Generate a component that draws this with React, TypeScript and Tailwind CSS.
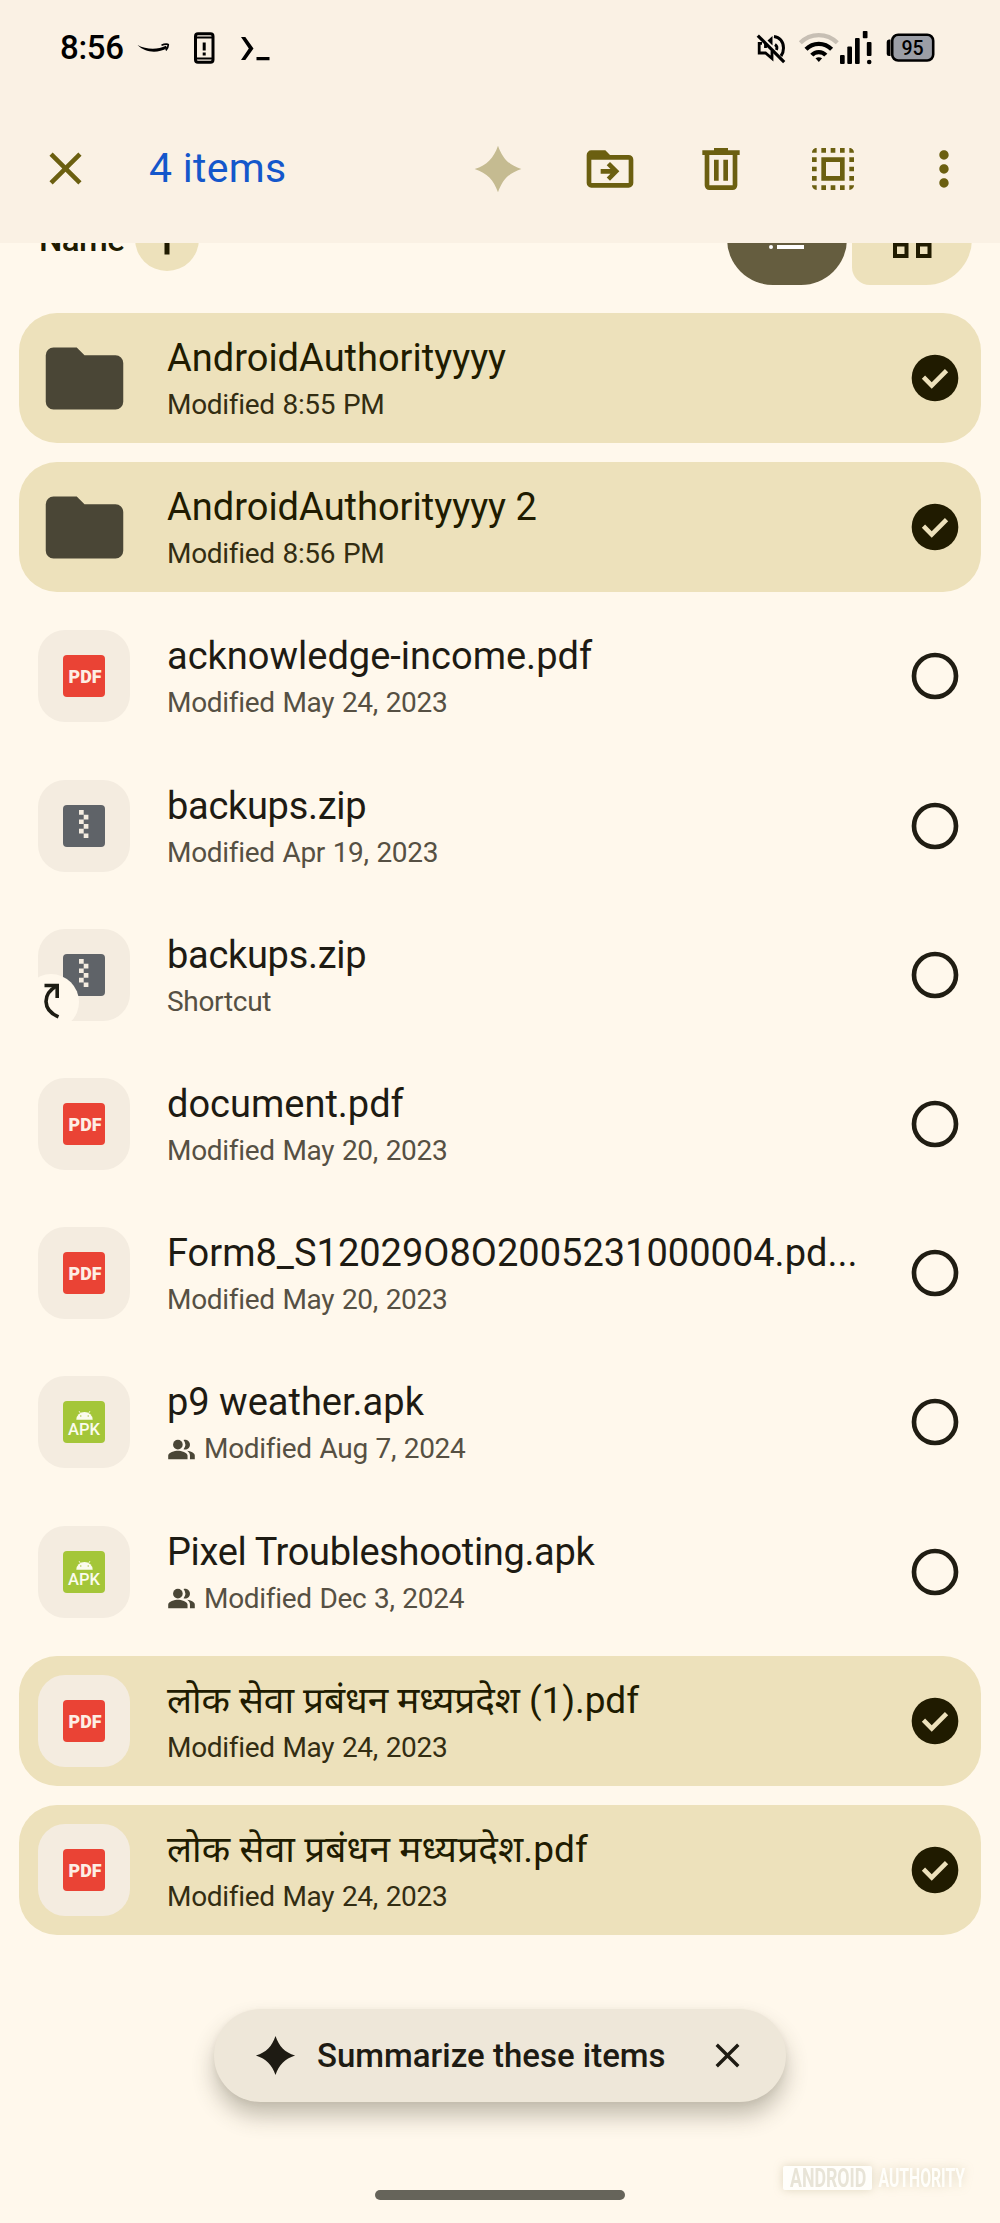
import React from 'react';
import clsx from 'clsx';
import { MdMoreVert, MdPeopleAlt, MdSelectAll } from 'react-icons/md';

type FileKind = 'folder' | 'pdf' | 'zip' | 'apk';

interface FileItem {
  name: string;
  detail: string;
  kind: FileKind;
  selected?: boolean;
  shared?: boolean;
  shortcut?: boolean;
  nameClass?: string;
}

const FILES: FileItem[] = [
  { name: 'AndroidAuthorityyyy', detail: 'Modified 8:55 PM', kind: 'folder', selected: true },
  { name: 'AndroidAuthorityyyy 2', detail: 'Modified 8:56 PM', kind: 'folder', selected: true },
  { name: 'acknowledge-income.pdf', detail: 'Modified May 24, 2023', kind: 'pdf' },
  { name: 'backups.zip', detail: 'Modified Apr 19, 2023', kind: 'zip', nameClass: 'text-[38px] tracking-[-0.3px]' },
  { name: 'backups.zip', detail: 'Shortcut', kind: 'zip', shortcut: true, nameClass: 'text-[38px] tracking-[-0.3px]' },
  { name: 'document.pdf', detail: 'Modified May 20, 2023', kind: 'pdf' },
  { name: 'Form8_S12029O8O2005231000004.pd...', detail: 'Modified May 20, 2023', kind: 'pdf' },
  { name: 'p9 weather.apk', detail: 'Modified Aug 7, 2024', kind: 'apk', shared: true },
  { name: 'Pixel Troubleshooting.apk', detail: 'Modified Dec 3, 2024', kind: 'apk', shared: true, nameClass: 'text-[38px] tracking-[-0.35px]' },
  { name: 'लोक सेवा प्रबंधन मध्यप्रदेश (1).pdf', detail: 'Modified May 24, 2023', kind: 'pdf', selected: true, nameClass: 'text-[37px] tracking-[-0.1px]' },
  { name: 'लोक सेवा प्रबंधन मध्यप्रदेश.pdf', detail: 'Modified May 24, 2023', kind: 'pdf', selected: true, nameClass: 'text-[37px] tracking-[0.1px]' },
];

const Sparkle = ({ className }: { className?: string }) => (
  <svg viewBox="0 0 24 24" fill="currentColor" className={className}>
    <path d="M12 2C13.9 7.4 16.6 10.2 22 12C16.6 13.8 13.9 16.6 12 22C10.1 16.6 7.4 13.8 2 12C7.4 10.2 10.1 7.4 12 2Z" />
  </svg>
);

const CloseIcon = ({ className }: { className?: string }) => (
  <svg viewBox="0 0 24 24" fill="currentColor" className={className}>
    <path d="M6.4 19L5 17.6l5.6-5.6L5 6.4 6.4 5l5.6 5.6L17.6 5 19 6.4 13.4 12l5.6 5.6-1.4 1.4-5.6-5.6z" />
  </svg>
);

const StatusBar = () => (
  <div className="flex h-[95px] items-center pl-[60px] text-black">
    <span className="w-[77px] text-[33px] font-medium leading-none tracking-[-0.3px]">8:56</span>
    <svg width="133" height="34" viewBox="137 30 133 34" className="shrink-0">
      <path d="M137.5 44C146 48.5 157 49.3 166 44.8L167.2 47C157 53 145 51.5 137.5 44Z" />
      <path d="M161.5 44.2C165 42.8 168.3 43 168.3 43.8S167.5 47.5 165.8 49.3" fill="none" stroke="#000" strokeWidth="1.7" />
      <rect x="195.5" y="32.7" width="17.5" height="28.6" rx="2.5" fill="none" stroke="#000" strokeWidth="3" />
      <path d="M195 36.5h18.5M195 57.5h18.5" stroke="#000" strokeWidth="2.2" />
      <path d="M202.7 41.5h3v8h-3zM202.7 51.5h3v3h-3z" />
      <path d="M241 36h4.3l8.2 11.5-8.2 11.5h-4.3l7.8-11.5zM256.5 56H269.5v3.2h-13z" />
    </svg>
    <svg width="182" height="36" viewBox="757 29 182 36" className="ml-auto mr-[62px] shrink-0">
      <g fill="none" stroke="#000" strokeWidth="2.8">
        <path d="M763 42.3L760.2 42.3V52h6.3l6.5 5.5V50M766.5 42v5" />
        <path d="M775 35.5c5.5.5 9.5 5 9.5 11.5 0 3.5-1 6-2.5 8" strokeWidth="3" />
        <path d="M776 43.5c1.8 1.2 2.3 3.5 1.5 5.5" />
        <path d="M758.8 34.6L785.2 61.2" strokeWidth="3.2" />
      </g>
      <path d="M768.5 39.5L773.5 35v9.5z" />
      <path d="M801.3 41.8C811.5 31.5 828 31.5 838.3 41.8" fill="none" stroke="#c7bfb4" strokeWidth="4.2" />
      <path d="M807 48.2C814 41 825.6 41 832.6 48.2M812.8 54.2C816.5 50 823 50 826.8 54.2" fill="none" stroke="#000" strokeWidth="4.2" />
      <path d="M816.5 57.3Q819.8 55.2 823.1 57.3L819.8 61Z" />
      <rect x="841" y="54" width="4.7" height="9" rx="1" />
      <rect x="848.3" y="45.5" width="4.7" height="17.5" rx="1" />
      <rect x="856" y="37" width="4.7" height="26" rx="1" />
      <rect x="863.8" y="30" width="4.7" height="7.3" rx=".8" />
      <rect x="867.8" y="41" width="4.7" height="14" rx="1" />
      <circle cx="870.2" cy="61" r="2.3" />
      <path d="M891.5 38.5v16.5h-1.5q-2.3 0-2.3-2.3V41q0-2.5 2.3-2.5z" />
      <rect x="893.2" y="33.7" width="41" height="25.8" rx="6" fill="#9b9ea6" stroke="#000" strokeWidth="2.6" />
      <text x="913.5" y="54" textAnchor="middle" fontFamily="Roboto" fontWeight="500" fontSize="19.5">95</text>
    </svg>
  </div>
);

const Toolbar = () => (
  <div className="flex h-[147.5px] items-center text-[#6b5f10]">
    <CloseIcon className="ml-[38px] size-[55px] shrink-0" />
    <h1 className="ml-[56px] text-[41px] leading-none tracking-[0.3px] text-[#1457cb]">4 items</h1>
    <div className="ml-auto grid w-[557.5px] grid-cols-5 justify-items-center">
      <Sparkle className="size-[56px] text-[#c5bb91]" />
      <svg viewBox="0 0 24 24" fill="currentColor" className="size-[56px]">
        <path d="M4 20q-.825 0-1.412-.587T2 18V6q0-.825.588-1.412T4 4h6l2 2h8q.825 0 1.413.588T22 8v10q0 .825-.587 1.413T20 20zm0-2h16V8H4z" />
        <path d="M12.2 14l-1.6 1.6L12 17l4-4-4-4-1.4 1.4 1.6 1.6H8v2z" />
      </svg>
      <svg viewBox="0 0 24 24" fill="currentColor" className="size-[56px]">
        <path d="M7 21q-.825 0-1.412-.587T5 19V6H4V4h5V3h6v1h5v2h-1v13q0 .825-.587 1.413T17 21zM17 6H7v13h10zM9 17h2V8H9zm4 0h2V8h-2z" />
      </svg>
      <MdSelectAll className="size-[56px]" />
      <MdMoreVert className="size-[56px]" />
    </div>
  </div>
);

// Partly scrolled under the toolbar
const SortRow = () => (
  <div className="-mt-[49.5px] flex h-[92px] items-center pl-[39px] pr-[28px] text-[#201b00]">
    <span className="w-[96px] text-[33px] font-medium leading-none tracking-[-0.6px]">Name</span>
    <div className="flex size-[64px] items-center justify-center rounded-full bg-[#ede1bb]">
      <svg viewBox="0 0 40 40" className="size-[40px]" fill="none" stroke="currentColor" strokeWidth="5">
        <path d="M20 35.5V8M8 19L20 7l12 12" />
      </svg>
    </div>
    <div className="ml-auto flex h-full gap-[5px]">
      <div className="flex w-[120px] items-center justify-center rounded-full bg-[#655d3f]">
        <svg width="36" height="28" viewBox="0 0 36 28" fill="#fff">
          <path d="M0 4h4.5v4H0zM8.5 4H36v4H8.5zM0 12h4.5v4H0zM8.5 12H36v4H8.5z" />
          <circle cx="2" cy="22" r="2" />
          <path d="M8 20h27v4H8z" />
        </svg>
      </div>
      <div className="flex w-[120px] items-center justify-center rounded-l-[18px] rounded-r-[46px] bg-[#ede1bb]">
        <svg width="40" height="40" viewBox="0 0 40 40" fill="none" stroke="#201b00" strokeWidth="4">
          <path d="M3 1.5h11.5v11.5H3zM26 1.5h11.5v11.5H26zM3 25.5h11.5v11.5H3zM26 25.5h11.5v11.5H26z" />
        </svg>
      </div>
    </div>
  </div>
);

const KindIcon = ({ kind }: { kind: FileKind }) => {
  if (kind === 'pdf') {
    return (
      <svg width="42" height="42" viewBox="0 0 42 42">
        <rect width="42" height="42" rx="4" fill="#ea4335" />
        <text x="5.5" y="28" textLength="33" lengthAdjust="spacingAndGlyphs" fontFamily="Roboto" fontWeight="900" fontSize="19" fill="#fdeee4">PDF</text>
      </svg>
    );
  }
  if (kind === 'zip') {
    return (
      <svg width="42" height="42" viewBox="0 0 42 42">
        <rect width="42" height="42" rx="4" fill="#5f6368" />
        <path fill="#f4ece0" d="M16 5h4.7v4.7H16zM20.7 9.7h4.7v4.7h-4.7zM16 14.4h4.7v4.7H16zM20.7 19h4.7v4.7h-4.7zM16 23.7h4.7v4.7H16zM20.7 28.4h4.7v4.7h-4.7z" />
      </svg>
    );
  }
  return (
    <svg width="42" height="42" viewBox="0 0 42 42">
      <rect width="42" height="42" rx="4" fill="#a4c639" />
      <path d="M13.3 18.7a8.2 7.7 0 0 1 16.4 0z" fill="#fbfbee" />
      <path d="M16 10l1.5 2.5M27 10l-1.5 2.5" stroke="#fbfbee" strokeWidth=".8" />
      <circle cx="17.8" cy="15" r=".7" fill="#a4c639" />
      <circle cx="25.2" cy="15" r=".7" fill="#a4c639" />
      <text x="5" y="33.6" textLength="32" lengthAdjust="spacingAndGlyphs" fontFamily="Roboto" fontWeight="500" fontSize="17" fill="#fbfbee">APK</text>
    </svg>
  );
};

const Thumbnail = ({ kind, shortcut }: { kind: FileKind; shortcut?: boolean }) => {
  if (kind === 'folder') {
    return (
      <svg viewBox="0 0 24 24" fill="#4a4636" className="size-[93px] shrink-0">
        <path d="M4 20q-.825 0-1.412-.587T2 18V6q0-.825.588-1.412T4 4h6l2 2h8q.825 0 1.413.588T22 8v10q0 .825-.587 1.413T20 20z" />
      </svg>
    );
  }
  return (
    <div className="relative mr-px flex size-[92px] shrink-0 items-center justify-center rounded-[27px] bg-[#f4ece0]">
      <KindIcon kind={kind} />
      {shortcut && (
        <div className="absolute -left-[15px] top-[45px] size-[56px] rounded-full bg-[#fff8ec]">
          <svg width="56" height="56" viewBox="0 0 56 56" fill="none" stroke="#1d1c13" strokeWidth="3.6">
            <path d="M21.5 11.5H34.2V24" />
            <path d="M33.5 12C19.5 20 19 36 35.5 42.8" />
          </svg>
        </div>
      )}
    </div>
  );
};

const SelectMark = ({ selected }: { selected?: boolean }) => (
  <svg viewBox="0 0 24 24" className="ml-auto mr-[18px] size-[56px] shrink-0">
    {selected ? (
      <>
        <circle cx="12" cy="12" r="10" fill="#201b00" />
        <path d="M10.6 16.6l7.05-7.05-1.4-1.4-5.65 5.65-2.85-2.85-1.4 1.4z" fill="#ede1bb" />
      </>
    ) : (
      <circle cx="12" cy="12" r="9" fill="none" stroke="#201d13" strokeWidth="2" />
    )}
  </svg>
);

const FileRow = ({ file }: { file: FileItem }) => (
  <li className={clsx('flex h-[130.2px] items-center rounded-[38px] pl-[19px]', file.selected && 'bg-[#ede1bb]')}>
    <Thumbnail kind={file.kind} shortcut={file.shortcut} />
    <div className="ml-[36px] flex flex-col gap-[5px] pt-[1px]">
      <p className={clsx('h-[48px] whitespace-nowrap leading-[48px]', file.nameClass ?? 'text-[38px]', file.selected ? 'text-[#201b00]' : 'text-[#1e1b13]')}>
        {file.name}
      </p>
      <div className={clsx('flex h-[36px] items-center gap-[8px] text-[28px] leading-[36px]', file.selected ? 'text-[#332d12]' : 'text-[#565043]')}>
        {file.shared && <MdPeopleAlt className="size-[29px] text-[#4a4636]" />}
        <span className="whitespace-nowrap tracking-[-0.3px] [word-spacing:1px]">{file.detail}</span>
      </div>
    </div>
    <SelectMark selected={file.selected} />
  </li>
);

const Watermark = () => (
  <div className="absolute bottom-[31px] right-[29px]">
    <svg width="188" height="28" viewBox="0 0 188 28" className="drop-shadow-[0_0_5px_rgba(150,140,90,0.3)]">
      <rect x="0" y="2" width="89" height="24" rx="2" fill="#fffefa" />
      <text transform="translate(7 23) scale(0.71 1)" fontFamily="Roboto" fontWeight="700" fontSize="25" fill="#e8e4d7">ANDROID</text>
      <text transform="translate(95.5 23) scale(0.63 1)" fontFamily="Roboto" fontWeight="700" fontSize="25" fill="#fffefa">AUTHORITY</text>
    </svg>
  </div>
);

const App: React.FC = () => {
  return (
    <div className="relative h-[2223px] w-[1000px] overflow-hidden bg-[#fff8ec] font-[Roboto,'Noto_Sans',sans-serif]">
      <header className="relative z-10 bg-[#faf1e4]">
        <StatusBar />
        <Toolbar />
      </header>

      <SortRow />

      <ul className="mx-[19px] mt-[28px] flex flex-col gap-[19px]">
        {FILES.map((file, i) => (
          <FileRow key={i} file={file} />
        ))}
      </ul>

      <div className="mx-auto mt-[74px] flex h-[93px] w-[572px] items-center rounded-full bg-[#eee7d9] pl-[38px] text-[#1e1b13] shadow-[0_14px_22px_rgba(60,55,35,0.3),0_2px_6px_rgba(60,55,35,0.06)]">
        <Sparkle className="size-[47px] shrink-0" />
        <span className="ml-[18px] whitespace-nowrap text-[33px] font-medium leading-none">Summarize these items</span>
        <CloseIcon className="ml-auto mr-[38px] size-[41px]" />
      </div>

      <div className="mx-auto mt-[88px] h-[10px] w-[250px] rounded-full bg-[#66645a]" />
      <Watermark />
    </div>
  );
};

export default App;
